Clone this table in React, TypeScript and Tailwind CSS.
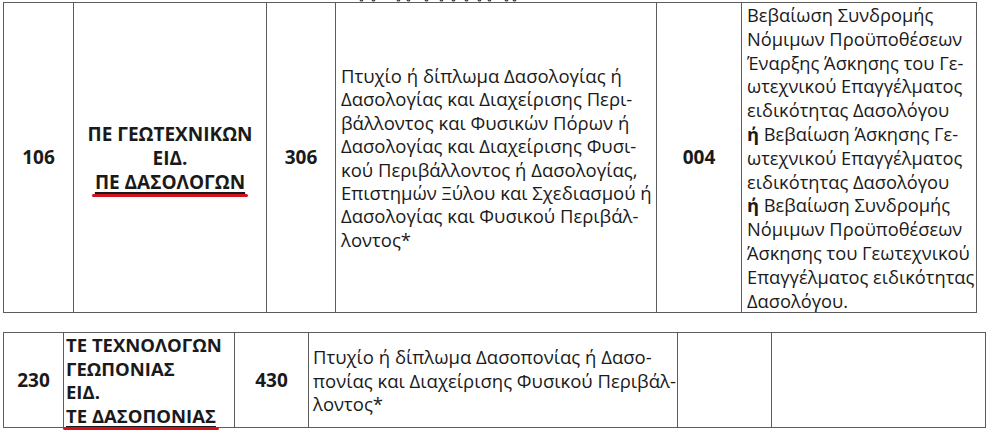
import React from "react";

function Marked({ children }: { children: React.ReactNode }) {
  return (
    <span className="relative inline-block underline decoration-[1.5px] underline-offset-[3px]">
      {children}
      {/* red pen stroke under the specialty */}
      <span className="absolute -left-[3px] -right-[3px] -bottom-[3px] h-[3px] rounded-full bg-[#d3131b]" />
    </span>
  );
}

function Lines({ lines }: { lines: React.ReactNode[] }) {
  return (
    <>
      {lines.map((l, i) => (
        <div key={i} className="whitespace-nowrap">
          {l}
        </div>
      ))}
    </>
  );
}

// bottoms of the letters of the row above, cut by the scan
function Fragments() {
  const xs = [360, 372, 397, 407, 425, 440, 452, 465, 478, 488, 505, 513];
  return (
    <svg width="988" height="2" className="block">
      {xs.map((x, i) => (
        <path key={i} d={`M${x} 0 q1 2 3 0`} stroke="#333" strokeWidth="1.2" fill="none" />
      ))}
    </svg>
  );
}

export default function App() {
  const degree106 = [
    "Πτυχίο ή δίπλωμα Δασολογίας ή",
    "Δασολογίας και Διαχείρισης Περι-",
    "βάλλοντος και Φυσικών Πόρων ή",
    "Δασολογίας και Διαχείρισης Φυσι-",
    "κού Περιβάλλοντος ή Δασολογίας,",
    "Επιστημών Ξύλου και Σχεδιασμού ή",
    "Δασολογίας και Φυσικού Περιβάλ-",
    "λοντος*",
  ];

  const cert106 = [
    "Βεβαίωση Συνδρομής",
    "Νόμιμων Προϋποθέσεων",
    "Έναρξης Άσκησης του Γε-",
    "ωτεχνικού Επαγγέλματος",
    "ειδικότητας Δασολόγου",
    <>
      <b>ή</b> Βεβαίωση Άσκησης Γε-
    </>,
    "ωτεχνικού Επαγγέλματος",
    "ειδικότητας Δασολόγου",
    <>
      <b>ή</b> Βεβαίωση Συνδρομής
    </>,
    "Νόμιμων Προϋποθέσεων",
    "Άσκησης του Γεωτεχνικού",
    "Επαγγέλματος ειδικότητας",
    "Δασολόγου.",
  ];

  const degree230 = [
    "Πτυχίο ή δίπλωμα Δασοπονίας ή Δασο-",
    "πονίας και Διαχείρισης Φυσικού Περιβάλ-",
    "λοντος*",
  ];

  const cell = "border-[1.5px] border-[#5c5c5c] p-0";
  const num = "text-center align-middle font-bold text-[19px]";

  return (
    <div className="w-[988px] h-[432px] overflow-hidden bg-white text-[#1a1a1a] font-['Open_Sans',sans-serif]">
      <Fragments />

      <table className="ml-[3px] w-[973px] table-fixed border-collapse">
        <colgroup>
          <col className="w-[70px]" />
          <col className="w-[193px]" />
          <col className="w-[69px]" />
          <col className="w-[321px]" />
          <col className="w-[85px]" />
          <col className="w-[235px]" />
        </colgroup>
        <tbody>
          <tr className="h-[308px]">
            <td className={`${cell} ${num}`}>106</td>
            <td className={`${cell} text-center align-middle font-bold text-[19px] leading-[24px]`}>
              <div>ΠΕ ΓΕΩΤΕΧΝΙΚΩΝ</div>
              <div>ΕΙΔ.</div>
              <div>
                <Marked>ΠΕ ΔΑΣΟΛΟΓΩΝ</Marked>
              </div>
            </td>
            <td className={`${cell} ${num}`}>306</td>
            <td className={`${cell} pl-[5px] align-middle text-[18.5px] leading-[23.4px]`}>
              <Lines lines={degree106} />
            </td>
            <td className={`${cell} ${num}`}>004</td>
            <td className={`${cell} pl-[5px] align-top text-[18.3px] leading-[23.8px]`}>
              <Lines lines={cert106} />
            </td>
          </tr>
        </tbody>
      </table>

      <div className="h-[19px]" />

      <table className="ml-[3px] w-[982px] table-fixed border-collapse">
        <colgroup>
          <col className="w-[60px]" />
          <col className="w-[171px]" />
          <col className="w-[74px]" />
          <col className="w-[369px]" />
          <col className="w-[94px]" />
          <col className="w-[214px]" />
        </colgroup>
        <tbody>
          <tr className="h-[94px]">
            <td className={`${cell} ${num}`}>230</td>
            <td className={`${cell} pl-[2px] align-middle font-bold text-[18.5px] leading-[23.5px]`}>
              <div>ΤΕ ΤΕΧΝΟΛΟΓΩΝ</div>
              <div>ΓΕΩΠΟΝΙΑΣ</div>
              <div>ΕΙΔ.</div>
              <div>
                <Marked>ΤΕ ΔΑΣΟΠΟΝΙΑΣ</Marked>
              </div>
            </td>
            <td className={`${cell} ${num}`}>430</td>
            <td className={`${cell} pl-[4px] align-middle text-[18.5px] leading-[23.5px]`}>
              <Lines lines={degree230} />
            </td>
            <td className={cell}></td>
            <td className={cell}></td>
          </tr>
        </tbody>
      </table>
    </div>
  );
}
